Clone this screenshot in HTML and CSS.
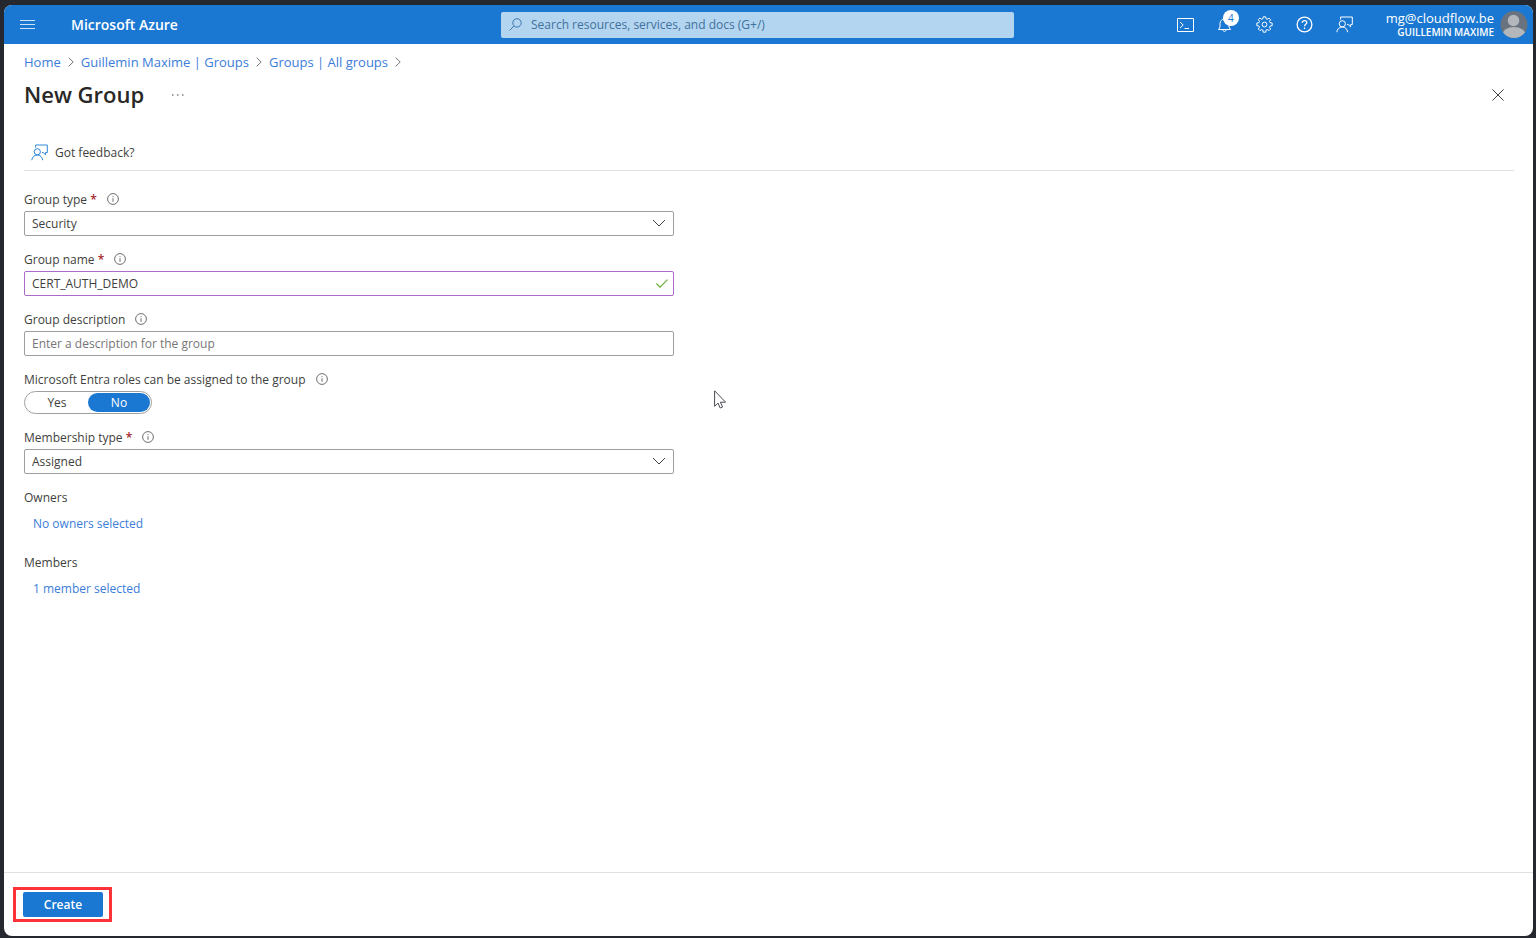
FILE: index.html
```html
<!DOCTYPE html>
<html lang="en">
  <head>
    <meta charset="utf-8" />
    <title>New Group - Microsoft Azure</title>
    <link rel="stylesheet" href="styles.css">
  </head>

  <body>
    <!-- shared icons -->
    <svg class="sprite" aria-hidden="true">
      <symbol id="info" viewBox="0 0 12 12">
        <circle cx="6" cy="6" r="5.4" />
        <path d="M6 5.2v3.6M6 3.2v1" />
      </symbol>
      <symbol id="chevron-down" viewBox="0 0 14 8">
        <path d="M1 1l6 6 6-6" />
      </symbol>
      <symbol id="chevron-right" viewBox="0 0 6 10">
        <path d="M.7 .7L5.2 5 .7 9.3" />
      </symbol>
      <symbol id="feedback" viewBox="0 0 17 17">
        <circle cx="6.3" cy="7.8" r="3.1" />
        <path d="M.8 16.2c.3-3 2.4-5.2 5.5-5.2s5 2.2 5.3 5.2M4.6 3.6V1h11.7v7.500h-1.700v2.300l-2.500-2.300h-1" />
      </symbol>
    </svg>

    <div class="window">
      <header class="topbar">
        <div class="brand">
          <button type="button" class="icon-button" aria-label="Show portal menu">
            <svg width="15" height="10" viewBox="0 0 15 10"><path d="M0 .5h15M0 4.500h15M0 8.500h15" /></svg>
          </button>
          <a href="#" class="brand-name">Microsoft Azure</a>
        </div>

        <label class="search">
          <svg width="13" height="13" viewBox="0 0 13 13"><circle cx="8" cy="4.900" r="4.200" /><path d="M5 8L.6 12.400" /></svg>
          <input type="text" aria-label="Search" placeholder="Search resources, services, and docs (G+/)">
        </label>

        <div class="tools">
          <button type="button" class="icon-button" aria-label="Cloud Shell">
            <svg width="17" height="16" viewBox="0 0 17 16"><path d="M.5 1.500h16v13H.5zM3 5l3.200 3L3 11M7.500 11.500H12" /></svg>
          </button>
          <button type="button" class="icon-button" aria-label="Notifications">
            <svg width="16" height="16" viewBox="0 0 16 16"><path d="M1.500 12.500h12l-1.500-2.500V6.500a4.500 4.500 0 0 0-9 0V10zM5.800 12.500c.1 2.500 3.300 2.500 3.400 0" /></svg>
            <span class="badge">4</span>
          </button>
          <button type="button" class="icon-button" aria-label="Settings">
            <svg width="17" height="17" viewBox="0 0 17 17"><circle cx="8.500" cy="8.500" r="2.400" /><path d="M7.300.8h2.400l.4 2 1.100.5 1.800-1.200 1.600 1.600-1.100 1.800.5 1.100 2.200.5v2.500l-2.200.5-.5 1.100 1.100 1.800-1.600 1.600-1.800-1.100-1.100.5-.4 2.200H7.300l-.5-2.200-1.100-.5-1.800 1.100-1.600-1.600 1.200-1.800-.5-1.100-2.200-.5V7.100L3 6.600l.5-1.100-1.200-1.800 1.600-1.600 1.800 1.200 1.100-.5z" /></svg>
          </button>
          <button type="button" class="icon-button help" aria-label="Help">
            <svg width="17" height="17" viewBox="0 0 17 17"><circle cx="8.500" cy="8.500" r="7.400" /><path d="M6.200 6.800c0-3 4.700-2.900 4.600-.1 0 1.600-2.300 1.700-2.300 3.500M8.500 11.600v1.400" /></svg>
          </button>
          <button type="button" class="icon-button" aria-label="Feedback">
            <svg width="17" height="17"><use href="#feedback" /></svg>
          </button>
          <button type="button" class="account">
            <span class="account-text">
              <span class="account-mail">mg@cloudflow.be</span>
              <span class="account-org">GUILLEMIN MAXIME</span>
            </span>
            <svg width="28" height="28" viewBox="0 0 28 28">
              <clipPath id="round"><circle cx="14" cy="13.500" r="13.500" /></clipPath>
              <g clip-path="url(#round)">
                <path class="avatar-back" d="M0 0h28v28H0z" />
                <circle class="avatar-person" cx="13.500" cy="9.500" r="5.800" />
                <ellipse class="avatar-person" cx="14" cy="23.500" rx="11.500" ry="7.500" />
              </g>
            </svg>
          </button>
        </div>
      </header>

      <main>
        <nav class="breadcrumb" aria-label="Breadcrumb">
          <a href="#">Home</a>
          <svg width="6" height="10"><use href="#chevron-right" /></svg>
          <a href="#">Guillemin Maxime | Groups</a>
          <svg width="6" height="10"><use href="#chevron-right" /></svg>
          <a href="#">Groups | All groups</a>
          <svg width="6" height="10"><use href="#chevron-right" /></svg>
        </nav>

        <div class="title-row">
          <h1>New Group</h1>
          <button type="button" class="more" aria-label="More">
            <svg width="12" height="2" viewBox="0 0 12 2"><path d="M0 1h1.500M5 1h1.500M10 1h1.500" /></svg>
          </button>
          <button type="button" class="close" aria-label="Close">
            <svg width="12" height="12" viewBox="0 0 12 12"><path d="M.4 .4l11.200 11.200M11.600 .4L.4 11.600" /></svg>
          </button>
        </div>

        <div class="commands">
          <button type="button">
            <svg width="17" height="17"><use href="#feedback" /></svg>
            Got feedback?
          </button>
        </div>

        <form id="groupForm">
          <div class="field">
            <div class="field-label">
              <label for="groupType">Group type <span class="required">*</span></label>
              <svg class="info" width="12" height="12"><use href="#info" /></svg>
            </div>
            <div class="control">
              <select id="groupType">
                <option selected>Security</option>
                <option>Microsoft 365</option>
              </select>
              <svg class="chevron" width="14" height="8"><use href="#chevron-down" /></svg>
            </div>
          </div>

          <div class="field">
            <div class="field-label">
              <label for="groupName">Group name <span class="required">*</span></label>
              <svg class="info" width="12" height="12"><use href="#info" /></svg>
            </div>
            <div class="control">
              <input type="text" id="groupName" class="edited" value="CERT_AUTH_DEMO">
              <svg class="valid" width="12" height="9" viewBox="0 0 12 9"><path d="M.5 4.500l3.500 3.700L11.500.6" /></svg>
            </div>
          </div>

          <div class="field">
            <div class="field-label">
              <label for="groupDescription">Group description</label>
              <svg class="info" width="12" height="12"><use href="#info" /></svg>
            </div>
            <div class="control">
              <input type="text" id="groupDescription" placeholder="Enter a description for the group">
            </div>
          </div>

          <div class="field">
            <div class="field-label">
              <span id="rolesLabel">Microsoft Entra roles can be assigned to the group</span>
              <svg class="info" width="12" height="12"><use href="#info" /></svg>
            </div>
            <div class="toggle" role="radiogroup" aria-labelledby="rolesLabel">
              <label><input type="radio" name="roles" value="yes"><span>Yes</span></label>
              <label><input type="radio" name="roles" value="no" checked><span>No</span></label>
            </div>
          </div>

          <div class="field">
            <div class="field-label">
              <label for="membershipType">Membership type <span class="required">*</span></label>
              <svg class="info" width="12" height="12"><use href="#info" /></svg>
            </div>
            <div class="control">
              <select id="membershipType">
                <option selected>Assigned</option>
              </select>
              <svg class="chevron" width="14" height="8"><use href="#chevron-down" /></svg>
            </div>
          </div>

          <div class="picker">
            <div class="field-label">Owners</div>
            <a href="#">No owners selected</a>
          </div>

          <div class="picker">
            <div class="field-label">Members</div>
            <a href="#">1 member selected</a>
          </div>
        </form>
      </main>

      <footer>
        <div class="highlight">
          <button type="submit" form="groupForm" class="create">Create</button>
        </div>
      </footer>
    </div>

    <svg class="pointer" width="13" height="19" viewBox="0 0 13 19">
      <path d="M.6.8v15.500l3.400-3.200 2.200 4.900 2.400-1-2.200-4.800h5.200z" />
    </svg>
  </body>
</html>
```

FILE: styles.css
```css
* {
  box-sizing: border-box;
}

body {
  margin: 0;
  padding: 5px 3px 2px 4px;
  min-height: 100vh;
  display: flex;
  background: #25282e;
  color: #403f3e;
  font-family: "Open Sans", sans-serif;
  font-size: 12px;
}

button,
input,
select {
  font: inherit;
  color: inherit;
}

button {
  padding: 0;
  border: none;
  background: none;
  cursor: pointer;
}

a {
  color: #3b7dd8;
  text-decoration: none;
}

svg {
  display: block;
  flex: none;
  fill: none;
  stroke: currentColor;
}

.sprite {
  position: absolute;
  width: 0;
  height: 0;
}

.window {
  flex: 1;
  display: flex;
  flex-direction: column;
  background: #fff;
  border-radius: 8px;
  overflow: hidden;
}

/* top bar */
.topbar {
  display: grid;
  grid-template-columns: minmax(0, 1fr) 513px 519px;
  align-items: center;
  height: 39px;
  background: #1a78d2;
  color: #fff;
}

.brand {
  display: flex;
  align-items: center;
  gap: 36px;
  padding-left: 16px;
}

.brand .icon-button {
  color: #cfe3f6;
}

.brand-name {
  color: #fff;
  font-size: 14px;
  font-weight: 600;
}

.search {
  display: flex;
  align-items: center;
  gap: 9px;
  height: 26px;
  padding: 0 8px;
  border-radius: 2px;
  background: #b3d5f0;
  color: #3e76ac;
}

.search input {
  flex: 1;
  padding: 0;
  border: none;
  outline: none;
  background: none;
}

.search input::placeholder {
  color: #42719c;
}

.tools {
  display: flex;
  align-items: center;
  justify-content: flex-end;
  gap: 23px;
  padding-right: 5px;
}

.icon-button {
  position: relative;
}

.help {
  stroke-width: 1.3;
}

.badge {
  position: absolute;
  left: 6px;
  top: -7px;
  width: 16px;
  height: 16px;
  border-radius: 50%;
  background: #fff;
  color: #1a78d2;
  font-size: 10px;
  line-height: 16px;
}

.account {
  display: flex;
  align-items: center;
  gap: 6px;
  margin-left: 10px;
}

.account-text {
  display: flex;
  flex-direction: column;
  text-align: right;
}

.account-mail {
  font-size: 13px;
  line-height: 16px;
}

.account-org {
  font-size: 10px;
  font-weight: 600;
  line-height: 13px;
}

.avatar-back {
  fill: #69737f;
  stroke: none;
}

.avatar-person {
  fill: #b3b6ba;
  stroke: none;
}

/* blade */
main {
  flex: 1;
  padding: 8px 19px 0 20px;
}

.breadcrumb {
  display: flex;
  align-items: center;
  gap: 7px;
  height: 20px;
  color: #777;
  font-size: 13px;
}

.title-row {
  display: flex;
  align-items: center;
  height: 46px;
}

h1 {
  margin: 0;
  padding-bottom: 2px;
  color: #292827;
  font-size: 22px;
  font-weight: 600;
}

.more {
  margin-left: 28px;
}

.close {
  margin-left: auto;
  margin-right: 10px;
}

.commands {
  display: flex;
  align-items: flex-end;
  height: 53px;
  padding: 0 7px 9px;
  border-bottom: 1px solid #e1e1e1;
}

.commands button {
  display: flex;
  align-items: center;
  gap: 7px;
}

.commands svg {
  color: #2b88d8;
}

/* form */
form {
  max-width: 650px;
  padding-top: 18px;
}

.field {
  margin-bottom: 13px;
}

.field-label {
  display: flex;
  align-items: center;
  gap: 10px;
  height: 22px;
  padding-bottom: 2px;
}

.required {
  color: #a4262c;
  font-weight: 600;
}

.info {
  color: #605e5c;
  stroke-width: 0.9;
}

.control {
  position: relative;
}

.control input,
.control select {
  display: block;
  width: 100%;
  height: 25px;
  padding: 0 7px;
  border: 1px solid #a19f9d;
  border-radius: 2px;
  outline: none;
  background: #fff;
  appearance: none;
}

.control input::placeholder {
  color: #767676;
}

.control input.edited {
  border-color: #ae6acb;
}

.chevron,
.valid {
  position: absolute;
  top: 8px;
  pointer-events: none;
}

.chevron {
  right: 8px;
}

.valid {
  right: 6px;
  color: #6bb03a;
  stroke-width: 1.2;
}

.toggle {
  display: flex;
  width: 128px;
  height: 23px;
  padding: 1px;
  border: 1px solid #a19f9d;
  border-radius: 12px;
}

.toggle label {
  flex: 1;
  text-align: center;
}

.toggle input {
  position: absolute;
  opacity: 0;
}

.toggle span {
  display: block;
  height: 19px;
  border-radius: 10px;
  line-height: 19px;
}

.toggle input:checked + span {
  background: #1a78d2;
  color: #fff;
}

.picker {
  margin-bottom: 16px;
}

.picker a {
  display: block;
  padding: 6px 9px 4px;
  line-height: 17px;
}

/* footer */
footer {
  height: 64px;
  padding: 14px 9px;
  border-top: 1px solid #e1e1e1;
}

.highlight {
  width: 99px;
  padding: 2px 6px 2px 7px;
  border: 3px solid #fb3338;
}

.create {
  display: block;
  width: 80px;
  height: 25px;
  border-radius: 2px;
  background: #1a78d2;
  color: #fff;
  font-weight: 600;
}

.pointer {
  position: absolute;
  left: 714px;
  top: 390px;
  fill: #fff;
  color: #4a4a55;
}
```
